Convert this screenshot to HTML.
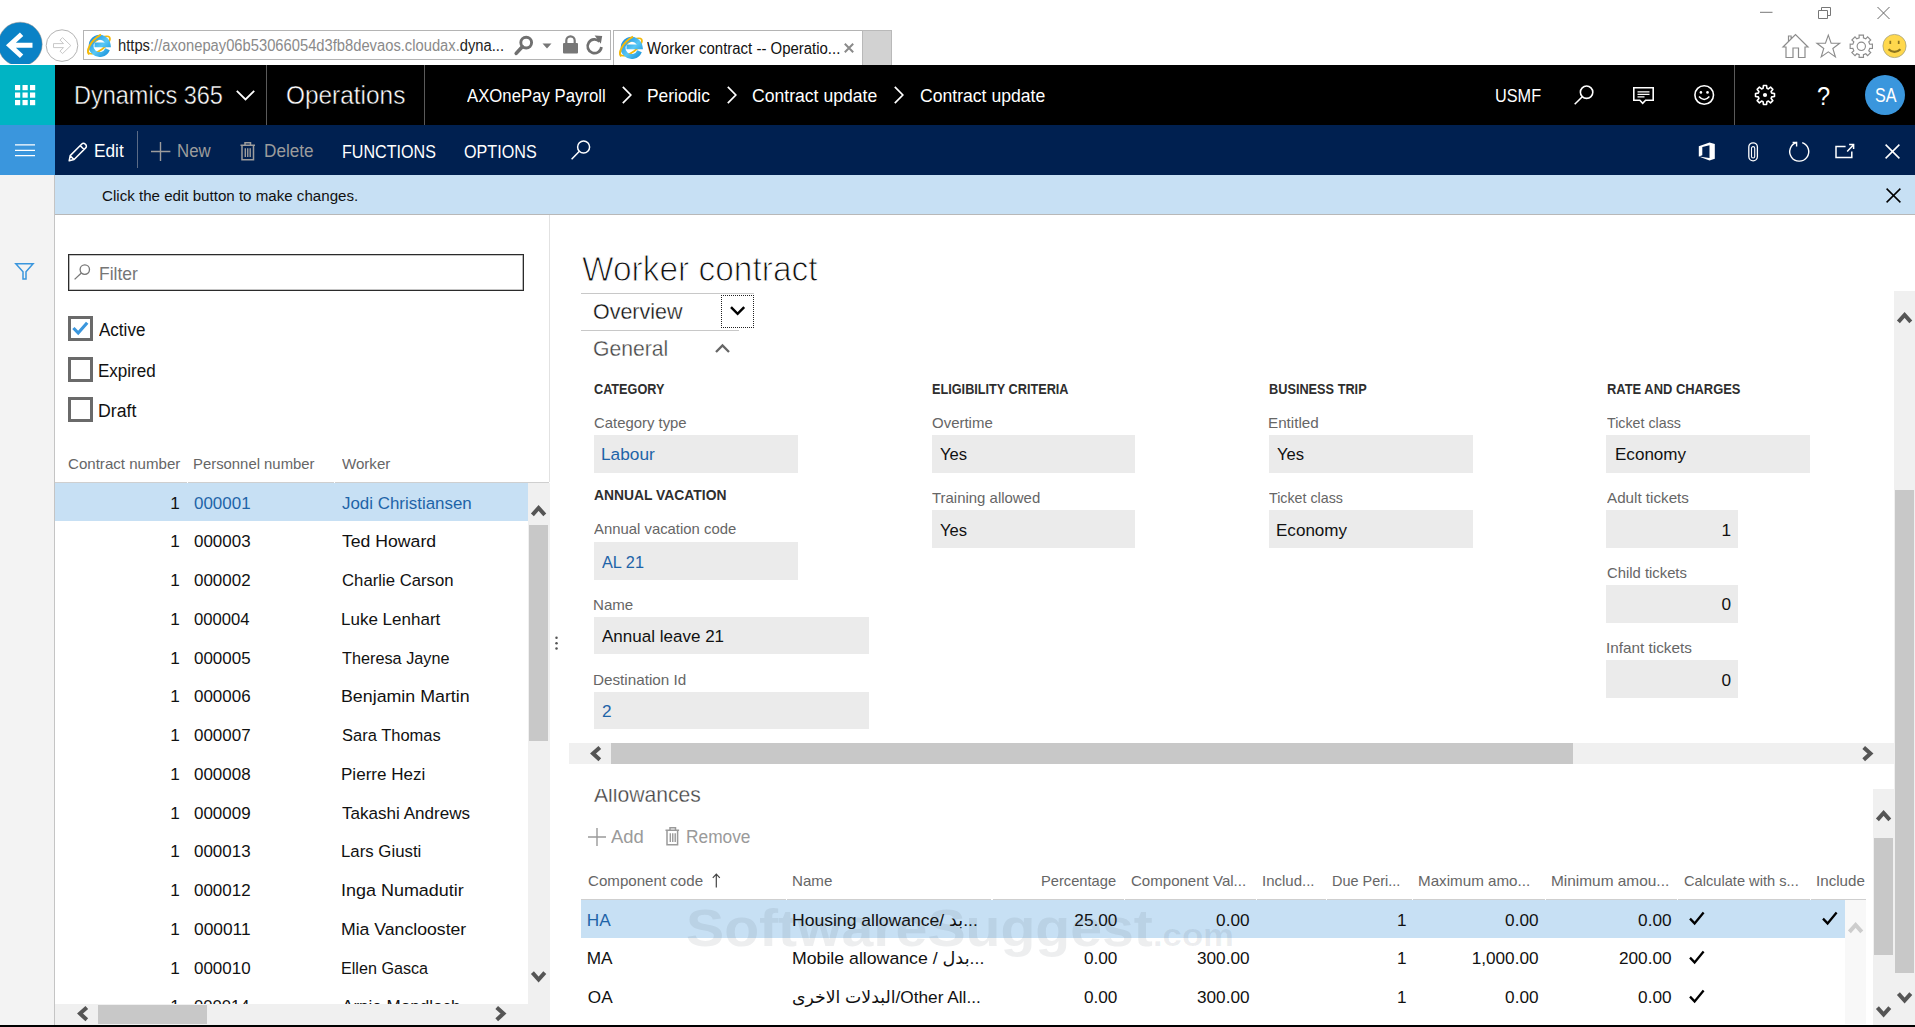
<!DOCTYPE html>
<html lang="en"><head><meta charset="utf-8"><title>Worker contract -- Operations</title>
<style>
html,body{margin:0;padding:0;}
body{width:1915px;height:1027px;overflow:hidden;background:#fff;position:relative;font-family:"Liberation Sans","DejaVu Sans",sans-serif;}
#r{position:absolute;left:0;top:0;width:1915px;height:1027px;overflow:hidden;}
#r div,#r svg,#r span.t{position:absolute;}
#r span.t{white-space:pre;line-height:1;}
#r svg{overflow:visible;}
.clip{overflow:hidden;}
</style></head>
<body><div id="r">
<div style="left:0px;top:0px;width:1915px;height:65px;background:#fff;"></div>
<div class="clip" style="left:0;top:20px;width:46px;height:44px;">
<svg style="left:-2.4px;top:2.2px;" width="44.4" height="44.4" viewBox="0 0 44.4 44.4"><circle cx="22.2" cy="22.2" r="22" fill="#0A82C6" stroke="#9a8f8a" stroke-width="0.5"/><path d="M34.5 23.3H11M23.6 12.3L11.6 23.3l12 11" fill="none" stroke="#fff" stroke-width="4.9" stroke-linecap="butt" stroke-linejoin="miter"/></svg>
</div>
<svg style="left:45px;top:29px;" width="34" height="34" viewBox="0 0 34 34"><circle cx="17" cy="16.6" r="15.8" fill="#fff" stroke="#b4b4b4" stroke-width="1"/><path d="M8.5 14.6h10l-3.5-3.5 2.5-2.5 8.3 8-8.3 8-2.5-2.5 3.5-3.5h-10z" fill="none" stroke="#c8c8c8" stroke-width="1"/></svg>
<div style="left:83px;top:30px;width:526px;height:27.5px;background:#fff;border:1px solid #b4b4b4;"></div>
<svg style="left:87px;top:33px;" width="24" height="24" viewBox="0 0 24 24"><defs><linearGradient id="ieg" x1="0" y1="0" x2="1" y2="1"><stop offset="0" stop-color="#1B8FE0"/><stop offset="0.55" stop-color="#59C8F5"/><stop offset="1" stop-color="#1E96DC"/></linearGradient></defs><ellipse cx="12" cy="12" rx="13" ry="5.2" transform="rotate(-36 12 12)" fill="none" stroke="#F4B90A" stroke-width="1.7"/><path d="M20.6 16.2A8.6 8.6 0 1 1 21.2 11.8H7.5" fill="none" stroke="url(#ieg)" stroke-width="4.8"/><path d="M2 21.5C-1 17.5 3.5 7.5 14 1.6" fill="none" stroke="#F4B90A" stroke-width="1.9"/></svg>
<span id="t0" class="t" style="left:118.00px;transform-origin:0 0;top:38px;font-size:15.6px;color:#8a8a8a;transform:scaleX(0.9452);"><span style="color:#222">https</span>://axonepay06b53066054d3fb8devaos.cloudax.<span style="color:#222">dyna...</span></span>
<svg style="left:514px;top:35px;" width="20" height="20" viewBox="0 0 20 20"><circle cx="12.2" cy="7.6" r="5.4" fill="none" stroke="#707070" stroke-width="2.9"/><path d="M8.3 11.7L2.2 18.4" stroke="#707070" stroke-width="3.6" stroke-linecap="round"/></svg>
<svg style="left:542px;top:43px;" width="10" height="6" viewBox="0 0 10 6"><path d="M0.5 0.5h9L5 5.5z" fill="#777"/></svg>
<svg style="left:562px;top:35px;" width="17" height="19" viewBox="0 0 17 19"><rect x="1" y="8" width="15" height="10.5" rx="1" fill="#777"/><path d="M4.3 8.5V5.5a4.2 4.2 0 0 1 8.4 0v3" fill="none" stroke="#777" stroke-width="2.2"/></svg>
<svg style="left:585px;top:34.5px;" width="19" height="20" viewBox="0 0 19 20"><path d="M14.6 6.6A6.9 6.9 0 1 0 16.4 12" fill="none" stroke="#707070" stroke-width="2.7"/><path d="M9.6 0.6l7.6 0.4-1.4 7.8z" fill="#707070"/></svg>
<div style="left:613px;top:30px;width:248px;height:36px;background:#fff;border:1px solid #b4b4b4;border-bottom:none;"></div>
<svg style="left:619px;top:35px;" width="24" height="24" viewBox="0 0 24 24"><defs><linearGradient id="ieh" x1="0" y1="0" x2="1" y2="1"><stop offset="0" stop-color="#1B8FE0"/><stop offset="0.55" stop-color="#59C8F5"/><stop offset="1" stop-color="#1E96DC"/></linearGradient></defs><ellipse cx="12" cy="12" rx="13" ry="5.2" transform="rotate(-36 12 12)" fill="none" stroke="#F4B90A" stroke-width="1.7"/><path d="M20.6 16.2A8.6 8.6 0 1 1 21.2 11.8H7.5" fill="none" stroke="url(#ieh)" stroke-width="4.8"/><path d="M2 21.5C-1 17.5 3.5 7.5 14 1.6" fill="none" stroke="#F4B90A" stroke-width="1.9"/></svg>
<span id="t1" class="t" style="left:646.50px;transform-origin:0 0;top:41px;font-size:15.8px;color:#111;transform:scaleX(0.9465);">Worker contract -- Operatio...</span>
<svg style="left:844px;top:43px;" width="10" height="10" viewBox="0 0 10 10"><path d="M0.8 0.8l8.4 8.4M9.2 0.8L0.8 9.2" stroke="#8a8a8a" stroke-width="2"/></svg>
<div style="left:862px;top:30px;width:28px;height:34px;background:#D2D2D2;border:1px solid #b9b9b9;border-bottom:none;"></div>
<svg style="left:1760px;top:6px;" width="14" height="14" viewBox="0 0 14 14"><path d="M0 6.3h12.5" stroke="#777" stroke-width="1"/></svg>
<svg style="left:1818px;top:7px;" width="14" height="14" viewBox="0 0 14 14"><path d="M0.5 3.5h9v8h-9z M3.5 3.5V0.5h9v8H9.5" fill="none" stroke="#777" stroke-width="1"/></svg>
<svg style="left:1877px;top:6px;" width="14" height="14" viewBox="0 0 14 14"><path d="M0.5 1l12 12M12.5 1l-12 12" stroke="#666" stroke-width="1"/></svg>
<svg style="left:1782px;top:33px;" width="27" height="26" viewBox="0 0 27 26"><path d="M1 14L13.5 1.5 26 14h-3v10.5h-6.5V15h-5.5v9.5H4V14z M6.5 8.2V3h2.6v2.7" fill="none" stroke="#8c8c8c" stroke-width="1.2" stroke-linejoin="miter"/></svg>
<svg style="left:1815.6px;top:33.8px;" width="24.6" height="24.6" viewBox="0 0 26 26"><path d="M13 1.2l3 8.6h9l-7.2 5.5 2.7 8.9L13 18.9 5.5 24.2l2.7-8.9L1 9.8h9z" fill="none" stroke="#8c8c8c" stroke-width="1.2" stroke-linejoin="miter"/></svg>
<svg style="left:1849px;top:33.8px;" width="24.6" height="24.6" viewBox="0 0 26 26"><path d="M24.77 10.66L24.77 15.34L21.93 15.22L20.88 17.75L22.98 19.67L19.67 22.98L17.75 20.88L15.22 21.93L15.34 24.77L10.66 24.77L10.78 21.93L8.25 20.88L6.33 22.98L3.02 19.67L5.12 17.75L4.07 15.22L1.23 15.34L1.23 10.66L4.07 10.78L5.12 8.25L3.02 6.33L6.33 3.02L8.25 5.12L10.78 4.07L10.66 1.23L15.34 1.23L15.22 4.07L17.75 5.12L19.67 3.02L22.98 6.33L20.88 8.25L21.93 10.78z" fill="none" stroke="#8c8c8c" stroke-width="1.2"/><circle cx="13" cy="13" r="4.4" fill="none" stroke="#8c8c8c" stroke-width="1.2"/></svg>
<svg style="left:1882px;top:33px;" width="26" height="26" viewBox="0 0 26 26"><circle cx="12.5" cy="13" r="11.6" fill="#FFD84D" stroke="#9a9a80" stroke-width="0.7"/><path d="M8.3 7.8v3.2M16.7 7.8v3.2" stroke="#8a7320" stroke-width="1.7"/><path d="M6.5 16.2q6 5.5 12 0" fill="none" stroke="#8a7320" stroke-width="2.2"/></svg>
<div style="left:0px;top:65px;width:1915px;height:60px;background:#000;"></div>
<div style="left:0px;top:65px;width:55px;height:60px;background:#00B4C4;"></div>
<svg style="left:15px;top:85px;" width="21" height="21" viewBox="0 0 21 21"><rect x="0.0" y="0.0" width="5.2" height="5.2" fill="#fff"/><rect x="7.5" y="0.0" width="5.2" height="5.2" fill="#fff"/><rect x="15.0" y="0.0" width="5.2" height="5.2" fill="#fff"/><rect x="0.0" y="7.5" width="5.2" height="5.2" fill="#fff"/><rect x="7.5" y="7.5" width="5.2" height="5.2" fill="#fff"/><rect x="15.0" y="7.5" width="5.2" height="5.2" fill="#fff"/><rect x="0.0" y="15.0" width="5.2" height="5.2" fill="#fff"/><rect x="7.5" y="15.0" width="5.2" height="5.2" fill="#fff"/><rect x="15.0" y="15.0" width="5.2" height="5.2" fill="#fff"/></svg>
<span id="t2" class="t" style="left:73.52px;transform-origin:0 0;top:83px;font-size:25px;color:#fff;-webkit-text-stroke:0.45px #000;transform:scaleX(0.9402);">Dynamics 365</span>
<svg style="left:236px;top:90px;" width="19" height="11" viewBox="0 0 19 11"><path d="M0.8 0.8L9.5 9.5 18.2 0.8" fill="none" stroke="#fff" stroke-width="1.8"/></svg>
<div style="left:266px;top:65px;width:1px;height:60px;background:#5a5a5a;"></div>
<span id="t3" class="t" style="left:285.52px;transform-origin:0 0;top:83px;font-size:25px;color:#fff;-webkit-text-stroke:0.45px #000;transform:scaleX(0.9761);">Operations</span>
<div style="left:424px;top:65px;width:1px;height:60px;background:#5a5a5a;"></div>
<span id="t4" class="t" style="left:467.00px;transform-origin:0 0;top:87px;font-size:18.4px;color:#fff;transform:scaleX(0.9106);">AXOnePay Payroll</span>
<svg style="left:621.7px;top:86px;" width="10" height="18" viewBox="0 0 10 18"><path d="M0.8 0.8L8.8 9 0.8 17.2" fill="none" stroke="#fff" stroke-width="1.7"/></svg>
<span id="t5" class="t" style="left:647.05px;transform-origin:0 0;top:87px;font-size:18.4px;color:#fff;transform:scaleX(0.9472);">Periodic</span>
<svg style="left:726.5px;top:86px;" width="10" height="18" viewBox="0 0 10 18"><path d="M0.8 0.8L8.8 9 0.8 17.2" fill="none" stroke="#fff" stroke-width="1.7"/></svg>
<span id="t6" class="t" style="left:752.40px;transform-origin:0 0;top:87px;font-size:18.4px;color:#fff;transform:scaleX(0.9569);">Contract update</span>
<svg style="left:894px;top:86px;" width="10" height="18" viewBox="0 0 10 18"><path d="M0.8 0.8L8.8 9 0.8 17.2" fill="none" stroke="#fff" stroke-width="1.7"/></svg>
<span id="t7" class="t" style="left:920.00px;transform-origin:0 0;top:87px;font-size:18.4px;color:#fff;transform:scaleX(0.9569);">Contract update</span>
<span id="t8" class="t" style="left:1495.12px;transform-origin:0 0;top:87px;font-size:18.4px;color:#fff;transform:scaleX(0.8847);">USMF</span>
<svg style="left:1574px;top:85px;" width="20" height="20" viewBox="0 0 20 20"><circle cx="12.6" cy="7.2" r="6.2" fill="none" stroke="#fff" stroke-width="1.6"/><path d="M8.3 11.7L0.7 19.3" stroke="#fff" stroke-width="1.6"/></svg>
<svg style="left:1633px;top:87px;" width="21" height="18" viewBox="0 0 21 18"><path d="M0.8 0.8h19.4v12.4h-7.6l-2.9 3.2-2.9-3.2H0.8z" fill="none" stroke="#fff" stroke-width="1.6"/><path d="M4.5 4.8h12M4.5 7.3h12M4.5 9.8h7" stroke="#fff" stroke-width="1.3"/></svg>
<svg style="left:1693.5px;top:85px;" width="21" height="21" viewBox="0 0 21 21"><circle cx="10.2" cy="10" r="9.3" fill="none" stroke="#fff" stroke-width="1.6"/><circle cx="6.9" cy="7.4" r="1.3" fill="#fff"/><circle cx="13.5" cy="7.4" r="1.3" fill="#fff"/><path d="M5 11.6q5.2 6 10.4 0" fill="none" stroke="#fff" stroke-width="1.5"/></svg>
<div style="left:1734px;top:65px;width:1px;height:60px;background:#5a5a5a;"></div>
<svg style="left:1755px;top:85px;" width="21" height="21" viewBox="0 0 21 21"><path d="M19.47 8.42L19.47 11.58L16.74 11.90L16.11 13.42L17.81 15.58L15.58 17.81L13.42 16.11L11.90 16.74L11.58 19.47L8.42 19.47L8.10 16.74L6.58 16.11L4.42 17.81L2.19 15.58L3.89 13.42L3.26 11.90L0.53 11.58L0.53 8.42L3.26 8.10L3.89 6.58L2.19 4.42L4.42 2.19L6.58 3.89L8.10 3.26L8.42 0.53L11.58 0.53L11.90 3.26L13.42 3.89L15.58 2.19L17.81 4.42L16.11 6.58L16.74 8.10z" fill="none" stroke="#fff" stroke-width="1.6" stroke-linejoin="round"/><circle cx="10" cy="10" r="2.1" fill="#fff"/></svg>
<span id="t9" class="t" style="left:1817.38px;transform-origin:0 0;top:84px;font-size:25.5px;color:#fff;transform:scaleX(0.9231);">?</span>
<svg style="left:1865px;top:75px;" width="40" height="40" viewBox="0 0 40 40"><circle cx="20" cy="20" r="20" fill="#3A96DD"/></svg>
<span id="t10" class="t" style="left:1874.50px;transform-origin:0 0;top:86px;font-size:19.5px;color:#fff;transform:scaleX(0.8267);">SA</span>
<div style="left:0px;top:125px;width:1915px;height:50px;background:#002050;"></div>
<div style="left:0px;top:125px;width:55px;height:50px;background:#3A96DD;"></div>
<svg style="left:15px;top:144px;" width="21" height="13" viewBox="0 0 21 13"><path d="M0 0.9h20M0 6.3h20M0 11.7h20" stroke="#fff" stroke-width="1.3"/></svg>
<svg style="left:68px;top:141px;" width="21" height="21" viewBox="0 0 21 21"><path d="M2.2 14.6L13.8 3a2.3 2.3 0 0 1 3.3 0l0.6 0.6a2.3 2.3 0 0 1 0 3.3L6.1 18.5 1.2 19.7z M12.2 4.6l3.9 3.9 M2.4 15l3.4 3.4" fill="none" stroke="#fff" stroke-width="1.5" stroke-linejoin="round"/></svg>
<span id="t11" class="t" style="left:93.54px;transform-origin:0 0;top:142px;font-size:18px;color:#fff;transform:scaleX(0.9562);">Edit</span>
<div style="left:137px;top:131px;width:1px;height:37px;background:#5b6b86;"></div>
<svg style="left:151.3px;top:142px;" width="20" height="20" viewBox="0 0 20 20"><path d="M9.5 0v19M0 9.5h19.4" stroke="#9C9C9C" stroke-width="1.4"/></svg>
<span id="t12" class="t" style="left:176.87px;transform-origin:0 0;top:142px;font-size:18px;color:#9C9C9C;transform:scaleX(0.9331);">New</span>
<svg style="left:240px;top:141.5px;" width="16" height="19" viewBox="0 0 16 19"><path d="M0.5 3.3h14.5M5 3V0.8h5.5V3M2 3.5v14.2h11.5V3.5" fill="none" stroke="#9C9C9C" stroke-width="1.5"/><path d="M5.3 6.3v8.6M7.75 6.3v8.6M10.2 6.3v8.6" stroke="#9C9C9C" stroke-width="1.4"/></svg>
<span id="t13" class="t" style="left:264.45px;transform-origin:0 0;top:142px;font-size:18px;color:#9C9C9C;transform:scaleX(0.9526);">Delete</span>
<span id="t14" class="t" style="left:341.59px;transform-origin:0 0;top:144px;font-size:17.6px;color:#fff;transform:scaleX(0.9149);">FUNCTIONS</span>
<span id="t15" class="t" style="left:463.50px;transform-origin:0 0;top:144px;font-size:17.6px;color:#fff;transform:scaleX(0.9178);">OPTIONS</span>
<svg style="left:571px;top:140px;" width="20" height="20" viewBox="0 0 20 20"><circle cx="12.6" cy="7" r="6" fill="none" stroke="#fff" stroke-width="1.5"/><path d="M8.4 11.3L0.6 19.2" stroke="#fff" stroke-width="1.5"/></svg>
<svg style="left:1698px;top:142px;" width="18" height="19" viewBox="0 0 18 19"><path d="M0.8 4.2L11.5 0.6l5.3 1.5v14.7l-5.3 1.6L0.8 14.6l10.7 1.3V3.3L4.3 5v8.3l-3.5 1.3z" fill="#fff"/></svg>
<svg style="left:1748.4px;top:141.6px;" width="11" height="20" viewBox="0 0 11 20"><rect x="0.8" y="0.8" width="8.6" height="18" rx="4.3" fill="none" stroke="#fff" stroke-width="1.3"/><rect x="3.5" y="4.6" width="3.2" height="11.4" rx="1.6" fill="none" stroke="#fff" stroke-width="1.1"/></svg>
<svg style="left:1789px;top:141px;" width="21" height="21" viewBox="0 0 21 21"><path d="M7.6 1.5A9.5 9.5 0 1 0 13.2 1.6" fill="none" stroke="#fff" stroke-width="1.4"/><path d="M3.6 1.5H7.6V5.6" fill="none" stroke="#fff" stroke-width="1.4"/></svg>
<svg style="left:1835px;top:143px;" width="20" height="16" viewBox="0 0 20 16"><path d="M10.6 3.4H1v11.1h15.8V8.6" fill="none" stroke="#fff" stroke-width="1.5"/><path d="M12.2 8.6L18.3 1.9M14.1 1.6h4.5V6" fill="none" stroke="#fff" stroke-width="1.5"/></svg>
<svg style="left:1884.5px;top:144px;" width="15" height="15" viewBox="0 0 15 15"><path d="M0.6 0.6l13.8 13.8M14.4 0.6L0.6 14.4" stroke="#fff" stroke-width="1.5"/></svg>
<div style="left:0px;top:175px;width:55px;height:849.5px;background:#F3F3F3;border-right:1px solid #c4c4c4;box-sizing:border-box;"></div>
<div style="left:55px;top:175px;width:1860px;height:39px;background:#C7E0F4;border-bottom:1px solid #b8b8b8;"></div>
<span id="t16" class="t" style="left:101.80px;transform-origin:0 0;top:188px;font-size:15.2px;color:#111;transform:scaleX(0.9950);">Click the edit button to make changes.</span>
<svg style="left:1886px;top:188px;" width="15" height="15" viewBox="0 0 15 15"><path d="M0.6 0.6l13.8 13.8M14.4 0.6L0.6 14.4" stroke="#000" stroke-width="1.5"/></svg>
<div style="left:0px;top:1024.5px;width:1915px;height:3px;background:#000;"></div>
<div style="left:549px;top:215px;width:1px;height:267px;background:#e2e2e2;"></div>
<svg style="left:14px;top:262px;" width="21" height="19" viewBox="0 0 21 19"><path d="M1.8 1.8H19.1L12 9.8V17.1H9V9.8z" fill="none" stroke="#3A96DD" stroke-width="1.5" stroke-linejoin="miter"/></svg>
<div style="left:68.3px;top:254px;width:453.5px;height:34.7px;background:#fff;border:1px solid #2b2b2b;box-shadow:inset 0 0 0 0.6px rgba(43,43,43,.55);"></div>
<svg style="left:74.3px;top:264px;" width="18" height="16" viewBox="0 0 18 16"><circle cx="10.8" cy="5.6" r="4.7" fill="none" stroke="#777" stroke-width="1.3"/><path d="M7.4 9L0.6 15.4" stroke="#777" stroke-width="1.3"/></svg>
<span id="t17" class="t" style="left:99.02px;transform-origin:0 0;top:266px;font-size:17.8px;color:#767676;transform:scaleX(0.9847);">Filter</span>
<div style="left:68px;top:316px;width:19px;height:19px;background:#fff;border:3px solid #6a6a6a;"></div>
<svg style="left:72px;top:321px;" width="18" height="15" viewBox="0 0 18 15"><path d="M1.4 7l4.8 5L15.2 1.8" fill="none" stroke="#3A96DD" stroke-width="3.2"/></svg>
<div style="left:68px;top:357px;width:19px;height:19px;background:#fff;border:3px solid #6a6a6a;"></div>
<div style="left:68px;top:397px;width:19px;height:19px;background:#fff;border:3px solid #6a6a6a;"></div>
<span id="t18" class="t" style="left:99.40px;transform-origin:0 0;top:322px;font-size:17.6px;color:#111;transform:scaleX(0.9676);">Active</span>
<span id="t19" class="t" style="left:98.43px;transform-origin:0 0;top:363px;font-size:17.6px;color:#111;transform:scaleX(0.9677);">Expired</span>
<span id="t20" class="t" style="left:98.39px;transform-origin:0 0;top:403px;font-size:17.6px;color:#111;transform:scaleX(1.0071);">Draft</span>
<span id="t21" class="t" style="left:67.60px;transform-origin:0 0;top:457px;font-size:14.8px;color:#666;transform:scaleX(1.0193);">Contract number</span>
<span id="t22" class="t" style="left:192.79px;transform-origin:0 0;top:457px;font-size:14.8px;color:#666;transform:scaleX(1.0051);">Personnel number</span>
<span id="t23" class="t" style="left:341.60px;transform-origin:0 0;top:457px;font-size:14.8px;color:#666;transform:scaleX(1.0193);">Worker</span>
<div style="left:55px;top:481.5px;width:131.5px;height:1.5px;background:#cfcfcf;"></div>
<div style="left:188px;top:481.5px;width:145.5px;height:1.5px;background:#cfcfcf;"></div>
<div style="left:335px;top:481.5px;width:214px;height:1.5px;background:#cfcfcf;"></div>
<div style="left:55px;top:483px;width:473px;height:38px;background:#C7E0F4;"></div>
<div style="left:528px;top:483px;width:21.7px;height:521px;background:#F0F0F0;"></div>
<div style="left:529px;top:525px;width:19px;height:215.5px;background:#C8C8C8;"></div>
<svg style="left:531px;top:504.7px;" width="15.2" height="11.5" viewBox="0 0 15.2 11.5"><path d="M1.4 9.8L7.6 3l6.2 6.8" fill="none" stroke="#555" stroke-width="4"/></svg>
<svg style="left:531px;top:971.3px;" width="15.2" height="11.5" viewBox="0 0 15.2 11.5"><path d="M1.4 1.7L7.6 8.5l6.2-6.8" fill="none" stroke="#555" stroke-width="4"/></svg>
<div class="clip" style="left:55px;top:483px;width:473px;height:521px;">
<span id="t24" class="t" style="left:115.20px;transform-origin:0 0;top:12px;font-size:17.2px;color:#111;">1</span>
<span id="t25" class="t" style="left:138.80px;transform-origin:0 0;top:12px;font-size:17.2px;color:#1E64A8;transform:scaleX(0.9860);">000001</span>
<span id="t26" class="t" style="left:286.60px;transform-origin:0 0;top:12px;font-size:17.2px;color:#1E64A8;transform:scaleX(0.9842);">Jodi Christiansen</span>
<span id="t27" class="t" style="left:115.20px;transform-origin:0 0;top:50px;font-size:17.2px;color:#111;">1</span>
<span id="t28" class="t" style="left:138.80px;transform-origin:0 0;top:50px;font-size:17.2px;color:#111;transform:scaleX(0.9860);">000003</span>
<span id="t29" class="t" style="left:286.60px;transform-origin:0 0;top:50px;font-size:17.2px;color:#111;transform:scaleX(1.0258);">Ted Howard</span>
<span id="t30" class="t" style="left:115.20px;transform-origin:0 0;top:89px;font-size:17.2px;color:#111;">1</span>
<span id="t31" class="t" style="left:138.80px;transform-origin:0 0;top:89px;font-size:17.2px;color:#111;transform:scaleX(0.9860);">000002</span>
<span id="t32" class="t" style="left:286.60px;transform-origin:0 0;top:89px;font-size:17.2px;color:#111;transform:scaleX(0.9731);">Charlie Carson</span>
<span id="t33" class="t" style="left:115.20px;transform-origin:0 0;top:128px;font-size:17.2px;color:#111;">1</span>
<span id="t34" class="t" style="left:138.80px;transform-origin:0 0;top:128px;font-size:17.2px;color:#111;transform:scaleX(0.9690);">000004</span>
<span id="t35" class="t" style="left:285.61px;transform-origin:0 0;top:128px;font-size:17.2px;color:#111;transform:scaleX(0.9893);">Luke Lenhart</span>
<span id="t36" class="t" style="left:115.20px;transform-origin:0 0;top:167px;font-size:17.2px;color:#111;">1</span>
<span id="t37" class="t" style="left:138.80px;transform-origin:0 0;top:167px;font-size:17.2px;color:#111;transform:scaleX(0.9860);">000005</span>
<span id="t38" class="t" style="left:286.60px;transform-origin:0 0;top:167px;font-size:17.2px;color:#111;transform:scaleX(0.9458);">Theresa Jayne</span>
<span id="t39" class="t" style="left:115.20px;transform-origin:0 0;top:205px;font-size:17.2px;color:#111;">1</span>
<span id="t40" class="t" style="left:138.80px;transform-origin:0 0;top:205px;font-size:17.2px;color:#111;transform:scaleX(0.9860);">000006</span>
<span id="t41" class="t" style="left:285.56px;transform-origin:0 0;top:205px;font-size:17.2px;color:#111;transform:scaleX(1.0357);">Benjamin Martin</span>
<span id="t42" class="t" style="left:115.20px;transform-origin:0 0;top:244px;font-size:17.2px;color:#111;">1</span>
<span id="t43" class="t" style="left:138.80px;transform-origin:0 0;top:244px;font-size:17.2px;color:#111;transform:scaleX(0.9860);">000007</span>
<span id="t44" class="t" style="left:286.60px;transform-origin:0 0;top:244px;font-size:17.2px;color:#111;transform:scaleX(0.9603);">Sara Thomas</span>
<span id="t45" class="t" style="left:115.20px;transform-origin:0 0;top:283px;font-size:17.2px;color:#111;">1</span>
<span id="t46" class="t" style="left:138.80px;transform-origin:0 0;top:283px;font-size:17.2px;color:#111;transform:scaleX(0.9860);">000008</span>
<span id="t47" class="t" style="left:285.61px;transform-origin:0 0;top:283px;font-size:17.2px;color:#111;transform:scaleX(0.9917);">Pierre Hezi</span>
<span id="t48" class="t" style="left:115.20px;transform-origin:0 0;top:322px;font-size:17.2px;color:#111;">1</span>
<span id="t49" class="t" style="left:138.80px;transform-origin:0 0;top:322px;font-size:17.2px;color:#111;transform:scaleX(0.9860);">000009</span>
<span id="t50" class="t" style="left:286.60px;transform-origin:0 0;top:322px;font-size:17.2px;color:#111;transform:scaleX(0.9936);">Takashi Andrews</span>
<span id="t51" class="t" style="left:115.20px;transform-origin:0 0;top:360px;font-size:17.2px;color:#111;">1</span>
<span id="t52" class="t" style="left:138.80px;transform-origin:0 0;top:360px;font-size:17.2px;color:#111;transform:scaleX(0.9860);">000013</span>
<span id="t53" class="t" style="left:285.62px;transform-origin:0 0;top:360px;font-size:17.2px;color:#111;transform:scaleX(0.9773);">Lars Giusti</span>
<span id="t54" class="t" style="left:115.20px;transform-origin:0 0;top:399px;font-size:17.2px;color:#111;">1</span>
<span id="t55" class="t" style="left:138.80px;transform-origin:0 0;top:399px;font-size:17.2px;color:#111;transform:scaleX(0.9860);">000012</span>
<span id="t56" class="t" style="left:285.56px;transform-origin:0 0;top:399px;font-size:17.2px;color:#111;transform:scaleX(1.0446);">Inga Numadutir</span>
<span id="t57" class="t" style="left:115.20px;transform-origin:0 0;top:438px;font-size:17.2px;color:#111;">1</span>
<span id="t58" class="t" style="left:138.80px;transform-origin:0 0;top:438px;font-size:17.2px;color:#111;transform:scaleX(1.0087);">000011</span>
<span id="t59" class="t" style="left:285.57px;transform-origin:0 0;top:438px;font-size:17.2px;color:#111;transform:scaleX(1.0269);">Mia Vanclooster</span>
<span id="t60" class="t" style="left:115.20px;transform-origin:0 0;top:477px;font-size:17.2px;color:#111;">1</span>
<span id="t61" class="t" style="left:138.80px;transform-origin:0 0;top:477px;font-size:17.2px;color:#111;transform:scaleX(0.9860);">000010</span>
<span id="t62" class="t" style="left:285.66px;transform-origin:0 0;top:477px;font-size:17.2px;color:#111;transform:scaleX(0.9391);">Ellen Gasca</span>
<span id="t63" class="t" style="left:115.20px;transform-origin:0 0;top:515px;font-size:17.2px;color:#111;">1</span>
<span id="t64" class="t" style="left:138.80px;transform-origin:0 0;top:515px;font-size:17.2px;color:#111;transform:scaleX(0.9690);">000014</span>
<span id="t65" class="t" style="left:286.60px;transform-origin:0 0;top:515px;font-size:17.2px;color:#111;transform:scaleX(0.9927);">Arnie Mondloch</span>
</div>
<div style="left:55px;top:1004px;width:494.7px;height:20.5px;background:#F0F0F0;"></div>
<div style="left:98px;top:1004.8px;width:109px;height:19.7px;background:#C8C8C8;"></div>
<svg style="left:76.8px;top:1006.3px;" width="11.5" height="15.2" viewBox="0 0 11.5 15.2"><path d="M9.8 1.4L3 7.6l6.8 6.2" fill="none" stroke="#555" stroke-width="4"/></svg>
<svg style="left:495.4px;top:1006.3px;" width="11.5" height="15.2" viewBox="0 0 11.5 15.2"><path d="M1.7 1.4L8.5 7.6l-6.8 6.2" fill="none" stroke="#555" stroke-width="4"/></svg>
<svg style="left:555.2px;top:635.5px;" width="3" height="15" viewBox="0 0 3 15"><circle cx="1.5" cy="1.8" r="1.25" fill="#555"/><circle cx="1.5" cy="7.2" r="1.25" fill="#555"/><circle cx="1.5" cy="12.6" r="1.25" fill="#555"/></svg>
<span id="t66" class="t" style="left:581.50px;transform-origin:0 0;top:252px;font-size:34.4px;color:#111;-webkit-text-stroke:1px #fff;transform:scaleX(0.9731);">Worker contract</span>
<div style="left:581px;top:293px;width:173px;height:1px;background:#c8c8c8;"></div>
<div style="left:581px;top:330px;width:158px;height:1px;background:#c8c8c8;"></div>
<span id="t67" class="t" style="left:593.32px;transform-origin:0 0;top:301px;font-size:21.8px;color:#111;-webkit-text-stroke:0.3px #fff;transform:scaleX(0.9845);">Overview</span>
<div style="left:721px;top:295px;width:31px;height:31px;background:transparent;border:1px dotted #222;"></div>
<svg style="left:729.5px;top:305.5px;" width="16" height="10" viewBox="0 0 16 10"><path d="M1 1.2l6.6 6.6 6.6-6.6" fill="none" stroke="#000" stroke-width="2.5"/></svg>
<span id="t68" class="t" style="left:593.33px;transform-origin:0 0;top:338px;font-size:21.8px;color:#444;-webkit-text-stroke:0.3px #fff;transform:scaleX(0.9696);">General</span>
<svg style="left:715px;top:343px;" width="15" height="10" viewBox="0 0 15 10"><path d="M1 9l6.5-6.6L14 9" fill="none" stroke="#666" stroke-width="2.3"/></svg>
<span id="t69" class="t" style="left:594.30px;transform-origin:0 0;top:382px;font-size:14.4px;color:#2e2e2e;font-weight:700;transform:scaleX(0.8799);">CATEGORY</span>
<span id="t70" class="t" style="left:594.30px;transform-origin:0 0;top:416px;font-size:14.8px;color:#666;transform:scaleX(1.0056);">Category type</span>
<div style="left:594px;top:435px;width:204px;height:37.5px;background:#EBEBEB;"></div>
<span id="t71" class="t" style="left:601.00px;transform-origin:0 0;top:446px;font-size:17.2px;color:#1E64A8;transform:scaleX(1.0039);">Labour</span>
<span id="t72" class="t" style="left:594.30px;transform-origin:0 0;top:488px;font-size:14.4px;color:#2e2e2e;font-weight:700;transform:scaleX(0.9631);">ANNUAL VACATION</span>
<span id="t73" class="t" style="left:594.30px;transform-origin:0 0;top:522px;font-size:14.8px;color:#666;transform:scaleX(1.0052);">Annual vacation code</span>
<div style="left:594px;top:542.3px;width:204px;height:37.5px;background:#EBEBEB;"></div>
<span id="t74" class="t" style="left:602.00px;transform-origin:0 0;top:554px;font-size:17.2px;color:#1E64A8;transform:scaleX(0.9469);">AL 21</span>
<span id="t75" class="t" style="left:593.28px;transform-origin:0 0;top:598px;font-size:14.8px;color:#666;transform:scaleX(1.0198);">Name</span>
<div style="left:594px;top:616.8px;width:275px;height:37.5px;background:#EBEBEB;"></div>
<span id="t76" class="t" style="left:602.00px;transform-origin:0 0;top:628px;font-size:17.2px;color:#111;transform:scaleX(0.9901);">Annual leave 21</span>
<span id="t77" class="t" style="left:593.27px;transform-origin:0 0;top:673px;font-size:14.8px;color:#666;transform:scaleX(1.0308);">Destination Id</span>
<div style="left:594px;top:691.9px;width:275px;height:37.5px;background:#EBEBEB;"></div>
<span id="t78" class="t" style="left:602.00px;transform-origin:0 0;top:703px;font-size:17.2px;color:#1E64A8;">2</span>
<span id="t79" class="t" style="left:932.00px;transform-origin:0 0;top:382px;font-size:14.4px;color:#2e2e2e;font-weight:700;transform:scaleX(0.8818);">ELIGIBILITY CRITERIA</span>
<span id="t80" class="t" style="left:932.00px;transform-origin:0 0;top:416px;font-size:14.8px;color:#666;transform:scaleX(1.0119);">Overtime</span>
<div style="left:932px;top:435px;width:203px;height:37.5px;background:#EBEBEB;"></div>
<span id="t81" class="t" style="left:940.00px;transform-origin:0 0;top:446px;font-size:17.2px;color:#111;transform:scaleX(0.9656);">Yes</span>
<span id="t82" class="t" style="left:932.00px;transform-origin:0 0;top:491px;font-size:14.8px;color:#666;transform:scaleX(1.0096);">Training allowed</span>
<div style="left:932px;top:510.2px;width:203px;height:37.5px;background:#EBEBEB;"></div>
<span id="t83" class="t" style="left:940.00px;transform-origin:0 0;top:522px;font-size:17.2px;color:#111;transform:scaleX(0.9656);">Yes</span>
<span id="t84" class="t" style="left:1269.20px;transform-origin:0 0;top:382px;font-size:14.4px;color:#2e2e2e;font-weight:700;transform:scaleX(0.8849);">BUSINESS TRIP</span>
<span id="t85" class="t" style="left:1268.17px;transform-origin:0 0;top:416px;font-size:14.8px;color:#666;transform:scaleX(1.0286);">Entitled</span>
<div style="left:1269px;top:435px;width:204px;height:37.5px;background:#EBEBEB;"></div>
<span id="t86" class="t" style="left:1277.00px;transform-origin:0 0;top:446px;font-size:17.2px;color:#111;transform:scaleX(0.9656);">Yes</span>
<span id="t87" class="t" style="left:1269.20px;transform-origin:0 0;top:491px;font-size:14.8px;color:#666;transform:scaleX(0.9628);">Ticket class</span>
<div style="left:1269px;top:510.2px;width:204px;height:37.5px;background:#EBEBEB;"></div>
<span id="t88" class="t" style="left:1276.01px;transform-origin:0 0;top:522px;font-size:17.2px;color:#111;transform:scaleX(0.9922);">Economy</span>
<span id="t89" class="t" style="left:1606.80px;transform-origin:0 0;top:382px;font-size:14.4px;color:#2e2e2e;font-weight:700;transform:scaleX(0.8975);">RATE AND CHARGES</span>
<span id="t90" class="t" style="left:1606.80px;transform-origin:0 0;top:416px;font-size:14.8px;color:#666;transform:scaleX(0.9628);">Ticket class</span>
<div style="left:1606px;top:435px;width:204px;height:37.5px;background:#EBEBEB;"></div>
<span id="t91" class="t" style="left:1614.71px;transform-origin:0 0;top:446px;font-size:17.2px;color:#111;transform:scaleX(0.9922);">Economy</span>
<span id="t92" class="t" style="left:1606.80px;transform-origin:0 0;top:491px;font-size:14.8px;color:#666;transform:scaleX(1.0268);">Adult tickets</span>
<div style="left:1606px;top:510.2px;width:132px;height:37.5px;background:#EBEBEB;"></div>
<span id="t93" class="t" style="left:1721.50px;transform-origin:0 0;top:522px;font-size:17.2px;color:#111;">1</span>
<span id="t94" class="t" style="left:1606.80px;transform-origin:0 0;top:566px;font-size:14.8px;color:#666;transform:scaleX(1.0017);">Child tickets</span>
<div style="left:1606px;top:585.2px;width:132px;height:37.5px;background:#EBEBEB;"></div>
<span id="t95" class="t" style="left:1721.50px;transform-origin:0 0;top:596px;font-size:17.2px;color:#111;">0</span>
<span id="t96" class="t" style="left:1605.77px;transform-origin:0 0;top:641px;font-size:14.8px;color:#666;transform:scaleX(1.0347);">Infant tickets</span>
<div style="left:1606px;top:660.2px;width:132px;height:37.5px;background:#EBEBEB;"></div>
<span id="t97" class="t" style="left:1721.50px;transform-origin:0 0;top:672px;font-size:17.2px;color:#111;">0</span>
<div style="left:1894.2px;top:291px;width:20.8px;height:733.5px;background:#F0F0F0;"></div>
<div style="left:1895.3px;top:490px;width:18.7px;height:483px;background:#C8C8C8;"></div>
<svg style="left:1897.1px;top:312.3px;" width="15.2" height="11.5" viewBox="0 0 15.2 11.5"><path d="M1.4 9.8L7.6 3l6.2 6.8" fill="none" stroke="#555" stroke-width="4"/></svg>
<svg style="left:1897.1px;top:992.3px;" width="15.2" height="11.5" viewBox="0 0 15.2 11.5"><path d="M1.4 1.7L7.6 8.5l6.2-6.8" fill="none" stroke="#555" stroke-width="4"/></svg>
<div style="left:569px;top:743.3px;width:1325.2px;height:20.5px;background:#F0F0F0;"></div>
<div style="left:611px;top:743.3px;width:962px;height:20.5px;background:#C8C8C8;"></div>
<svg style="left:590.3px;top:746px;" width="11.5" height="15.2" viewBox="0 0 11.5 15.2"><path d="M9.8 1.4L3 7.6l6.8 6.2" fill="none" stroke="#555" stroke-width="4"/></svg>
<svg style="left:1861.7px;top:746px;" width="11.5" height="15.2" viewBox="0 0 11.5 15.2"><path d="M1.7 1.4L8.5 7.6l-6.8 6.2" fill="none" stroke="#555" stroke-width="4"/></svg>
<div class="clip" style="left:581px;top:789px;width:400px;height:30px;">
<span id="t98" class="t" style="left:13.30px;transform-origin:0 0;top:-5px;font-size:21.8px;color:#444;-webkit-text-stroke:0.3px #fff;transform:scaleX(0.9696);">Allowances</span>
</div>
<svg style="left:587.8px;top:828px;" width="19" height="19" viewBox="0 0 19 19"><path d="M9 0v18M0 9h18" stroke="#9a9a9a" stroke-width="1.4"/></svg>
<span id="t99" class="t" style="left:611.40px;transform-origin:0 0;top:829px;font-size:17.6px;color:#9a9a9a;transform:scaleX(1.0485);">Add</span>
<svg style="left:664.5px;top:827px;" width="15" height="18" viewBox="0 0 15 18"><path d="M0.5 3.3h13.6M5 3V0.8h5.5V3M2 3.5v14.2h10.6V3.5" fill="none" stroke="#9a9a9a" stroke-width="1.5"/><path d="M5.3 6.3v8.6M7.75 6.3v8.6M10.2 6.3v8.6" stroke="#9a9a9a" stroke-width="1.4"/></svg>
<span id="t100" class="t" style="left:686.02px;transform-origin:0 0;top:829px;font-size:17.6px;color:#9a9a9a;transform:scaleX(0.9839);">Remove</span>
<div style="left:1873px;top:789px;width:21.5px;height:235.5px;background:#F0F0F0;"></div>
<div style="left:1874px;top:838.3px;width:18.7px;height:116.5px;background:#C8C8C8;"></div>
<svg style="left:1876.1px;top:810.3px;" width="15.2" height="11.5" viewBox="0 0 15.2 11.5"><path d="M1.4 9.8L7.6 3l6.2 6.8" fill="none" stroke="#555" stroke-width="4"/></svg>
<svg style="left:1876.1px;top:1005.8px;" width="15.2" height="11.5" viewBox="0 0 15.2 11.5"><path d="M1.4 1.7L7.6 8.5l6.2-6.8" fill="none" stroke="#555" stroke-width="4"/></svg>
<span id="t101" class="t" style="left:587.80px;transform-origin:0 0;top:874px;font-size:14.8px;color:#666;transform:scaleX(1.0207);">Component code</span>
<svg style="left:712px;top:872.5px;" width="9" height="15" viewBox="0 0 9 15"><path d="M4.3 14.5V1.2M0.8 4.8L4.3 1.2l3.5 3.6" fill="none" stroke="#444" stroke-width="1.2"/></svg>
<span id="t102" class="t" style="left:791.88px;transform-origin:0 0;top:874px;font-size:14.8px;color:#666;transform:scaleX(1.0225);">Name</span>
<span id="t103" class="t" style="left:1041.41px;transform-origin:0 0;top:874px;font-size:14.8px;color:#666;transform:scaleX(0.9926);">Percentage</span>
<span id="t104" class="t" style="left:1130.50px;transform-origin:0 0;top:874px;font-size:14.8px;color:#666;transform:scaleX(1.0168);">Component Val...</span>
<span id="t105" class="t" style="left:1261.99px;transform-origin:0 0;top:874px;font-size:14.8px;color:#666;transform:scaleX(1.0139);">Includ...</span>
<span id="t106" class="t" style="left:1332.02px;transform-origin:0 0;top:874px;font-size:14.8px;color:#666;transform:scaleX(0.9780);">Due Peri...</span>
<span id="t107" class="t" style="left:1418.27px;transform-origin:0 0;top:874px;font-size:14.8px;color:#666;transform:scaleX(1.0257);">Maximum amo...</span>
<span id="t108" class="t" style="left:1550.96px;transform-origin:0 0;top:874px;font-size:14.8px;color:#666;transform:scaleX(1.0417);">Minimum amou...</span>
<span id="t109" class="t" style="left:1684.00px;transform-origin:0 0;top:874px;font-size:14.8px;color:#666;transform:scaleX(0.9892);">Calculate with s...</span>
<span id="t110" class="t" style="left:1815.98px;transform-origin:0 0;top:874px;font-size:14.8px;color:#666;transform:scaleX(1.0240);">Include</span>
<div style="left:581px;top:898.8px;width:205px;height:1.5px;background:#cfcfcf;"></div>
<div style="left:787.2px;top:898.8px;width:204.09999999999997px;height:1.5px;background:#cfcfcf;"></div>
<div style="left:992.5px;top:898.8px;width:131.3px;height:1.5px;background:#cfcfcf;"></div>
<div style="left:1125.0px;top:898.8px;width:131.00000000000006px;height:1.5px;background:#cfcfcf;"></div>
<div style="left:1257.2px;top:898.8px;width:68.8px;height:1.5px;background:#cfcfcf;"></div>
<div style="left:1327.2px;top:898.8px;width:84.8px;height:1.5px;background:#cfcfcf;"></div>
<div style="left:1413.2px;top:898.8px;width:131.8px;height:1.5px;background:#cfcfcf;"></div>
<div style="left:1546.2px;top:898.8px;width:130.8px;height:1.5px;background:#cfcfcf;"></div>
<div style="left:1678.2px;top:898.8px;width:131.8px;height:1.5px;background:#cfcfcf;"></div>
<div style="left:1811.2px;top:898.8px;width:54.8px;height:1.5px;background:#cfcfcf;"></div>
<div style="left:1845px;top:900.3px;width:21px;height:124.2px;background:#F8F8F8;"></div>
<svg style="left:1847.9px;top:922px;" width="15.2" height="11.5" viewBox="0 0 15.2 11.5"><path d="M1.4 9.8L7.6 3l6.2 6.8" fill="none" stroke="#cdcdcd" stroke-width="4"/></svg>
<div style="left:581px;top:900.3px;width:1264px;height:37.5px;background:#C7E0F4;"></div>
<span id="t111" class="t" style="left:586.80px;transform-origin:0 0;top:912px;font-size:17.2px;color:#1E64A8;">HA</span>
<span id="t112" class="t" style="left:791.88px;transform-origin:0 0;top:912px;font-size:17.2px;color:#111;transform:scaleX(1.0212);">Housing allowance/ بد...</span>
<span id="t113" class="t" style="left:1074.35px;transform-origin:0 0;top:912px;font-size:17.2px;color:#111;">25.00</span>
<span id="t114" class="t" style="left:1216.11px;transform-origin:0 0;top:912px;font-size:17.2px;color:#111;">0.00</span>
<span id="t115" class="t" style="left:1397.00px;transform-origin:0 0;top:912px;font-size:17.2px;color:#111;">1</span>
<span id="t116" class="t" style="left:1505.11px;transform-origin:0 0;top:912px;font-size:17.2px;color:#111;">0.00</span>
<span id="t117" class="t" style="left:1638.11px;transform-origin:0 0;top:912px;font-size:17.2px;color:#111;">0.00</span>
<svg style="left:1688.5px;top:911.4px;" width="16" height="14" viewBox="0 0 16 14"><path d="M1 7.6l4.6 4.8L14.6 1.4" fill="none" stroke="#000" stroke-width="2.3"/></svg>
<svg style="left:1821.5px;top:911.4px;" width="16" height="14" viewBox="0 0 16 14"><path d="M1 7.6l4.6 4.8L14.6 1.4" fill="none" stroke="#000" stroke-width="2.3"/></svg>
<span id="t118" class="t" style="left:586.80px;transform-origin:0 0;top:950px;font-size:17.2px;color:#111;">MA</span>
<span id="t119" class="t" style="left:791.87px;transform-origin:0 0;top:950px;font-size:17.2px;color:#111;transform:scaleX(1.0297);">Mobile allowance / بدل...</span>
<span id="t120" class="t" style="left:1083.91px;transform-origin:0 0;top:950px;font-size:17.2px;color:#111;">0.00</span>
<span id="t121" class="t" style="left:1196.99px;transform-origin:0 0;top:950px;font-size:17.2px;color:#111;">300.00</span>
<span id="t122" class="t" style="left:1397.00px;transform-origin:0 0;top:950px;font-size:17.2px;color:#111;">1</span>
<span id="t123" class="t" style="left:1471.66px;transform-origin:0 0;top:950px;font-size:17.2px;color:#111;">1,000.00</span>
<span id="t124" class="t" style="left:1618.99px;transform-origin:0 0;top:950px;font-size:17.2px;color:#111;">200.00</span>
<svg style="left:1688.5px;top:949.9499999999999px;" width="16" height="14" viewBox="0 0 16 14"><path d="M1 7.6l4.6 4.8L14.6 1.4" fill="none" stroke="#000" stroke-width="2.3"/></svg>
<span id="t125" class="t" style="left:587.80px;transform-origin:0 0;top:989px;font-size:17.2px;color:#111;">OA</span>
<span id="t126" class="t" style="left:791.90px;transform-origin:0 0;top:989px;font-size:17.2px;color:#111;transform:scaleX(1.0037);">البدلات الاخرى/Other All...</span>
<span id="t127" class="t" style="left:1083.91px;transform-origin:0 0;top:989px;font-size:17.2px;color:#111;">0.00</span>
<span id="t128" class="t" style="left:1196.99px;transform-origin:0 0;top:989px;font-size:17.2px;color:#111;">300.00</span>
<span id="t129" class="t" style="left:1397.00px;transform-origin:0 0;top:989px;font-size:17.2px;color:#111;">1</span>
<span id="t130" class="t" style="left:1505.11px;transform-origin:0 0;top:989px;font-size:17.2px;color:#111;">0.00</span>
<span id="t131" class="t" style="left:1638.11px;transform-origin:0 0;top:989px;font-size:17.2px;color:#111;">0.00</span>
<svg style="left:1688.5px;top:988.5px;" width="16" height="14" viewBox="0 0 16 14"><path d="M1 7.6l4.6 4.8L14.6 1.4" fill="none" stroke="#000" stroke-width="2.3"/></svg>
<span id="t132" class="t" style="left:685.50px;transform-origin:0 0;top:903px;font-size:51px;color:rgba(60,70,90,0.095);font-weight:700;transform:scaleX(1.1208);">SoftwareSuggest<span style="font-size:31px">.com</span></span>
</div></body></html>
